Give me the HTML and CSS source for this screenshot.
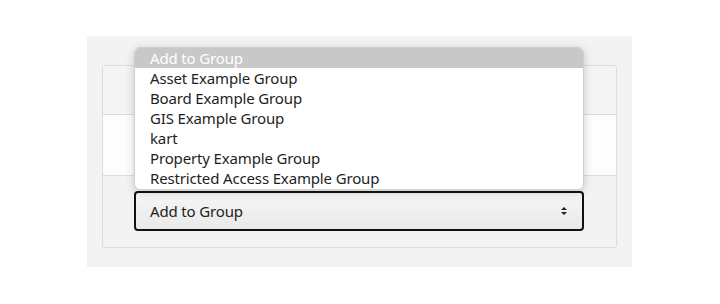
FILE: index.html
```html
<!DOCTYPE html>
<html>
<head>
<meta charset="utf-8">
<link rel="stylesheet" href="styles.css">
</head>
<body>
<div class="panel">
  <div class="card">
    <div class="row row-head"></div>
    <div class="row row-mid"></div>
    <div class="row row-foot">
      <div class="select">
        <span class="select-label">Add to Group</span>
        <svg class="select-arrows" width="8" height="10" viewBox="0 0 8 10"><path d="M4 1 L7 4 H1 Z M4 9 L7 6 H1 Z" fill="#222"/></svg>
      </div>
    </div>
  </div>
  <ul class="menu">
    <li class="opt opt-active">Add to Group</li>
    <li class="opt">Asset Example Group</li>
    <li class="opt">Board Example Group</li>
    <li class="opt">GIS Example Group</li>
    <li class="opt">kart</li>
    <li class="opt">Property Example Group</li>
    <li class="opt">Restricted Access Example Group</li>
  </ul>
</div>
</body>
</html>
```
FILE: styles.css
```css
html, body {
  margin: 0;
  padding: 0;
  background: #ffffff;
  font-family: "Noto Sans", "Open Sans", sans-serif;
}
.panel {
  position: relative;
  margin: 36px 0 0 87px;
  width: 545px;
  height: 231px;
  box-sizing: border-box;
  padding: 29px 15px 0 15px;
  background: #f3f3f3;
}
.card {
  width: 515px;
  height: 183px;
  box-sizing: border-box;
  border: 1px solid #dcdcdc;
  border-radius: 3px;
  display: flex;
  flex-direction: column;
  overflow: hidden;
}
.row {
  box-sizing: border-box;
}
.row-head {
  height: 49px;
  background: #f4f4f4;
  border-bottom: 1px solid #dcdcdc;
}
.row-mid {
  height: 61px;
  background: #fdfdfd;
  border-bottom: 1px solid #dcdcdc;
}
.row-foot {
  flex: 1;
  background: #f3f3f3;
  padding: 15px 0 0 31px;
}
.select {
  width: 450px;
  height: 40px;
  box-sizing: border-box;
  border: 2px solid #111;
  border-radius: 4px;
  background: linear-gradient(#f6f6f6, #e9e9e9);
  display: flex;
  align-items: center;
  justify-content: space-between;
  padding: 0 14px 0 14px;
  font-size: 15px;
  letter-spacing: -0.15px;
  color: #222;
}
.select-arrows {
  display: block;
}
.menu {
  position: absolute;
  left: 47px;
  top: 11px;
  width: 450px;
  margin: 0;
  padding: 0;
  list-style: none;
  background: #fff;
  border: 1px solid #cfcfcf;
  border-radius: 6px;
  box-shadow: 0 2px 10px rgba(0,0,0,0.18);
  overflow: hidden;
  box-sizing: border-box;
  padding-bottom: 1px;
}
.opt {
  height: 20px;
  line-height: 20px;
  padding-left: 15px;
  font-size: 15px;
  letter-spacing: -0.15px;
  color: #1e1e1e;
}
.opt-active {
  background: #c8c8c8;
  color: #fff;
}
```
